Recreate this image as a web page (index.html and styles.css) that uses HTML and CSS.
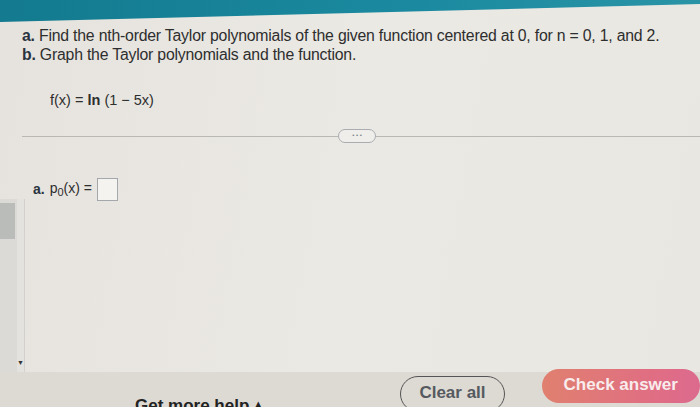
FILE: index.html
```html
<!DOCTYPE html>
<html>
<head>
<meta charset="utf-8">
<link rel="stylesheet" href="styles.css">
</head>
<body>
<div class="page">
  <div class="topbar"></div>
  <div class="main">
    <div class="question">
      <p class="qline"><b class="lbl">a.</b> Find the nth-order Taylor polynomials of the given function centered at 0, for n = 0, 1, and 2.</p>
      <p class="qline"><b class="lbl">b.</b> Graph the Taylor polynomials and the function.</p>
      <p class="func">f(x) = <b>ln</b> (1 − 5x)</p>
    </div>
    <div class="divider">
      <span class="rule"></span>
      <span class="pill">• • •</span>
      <span class="rule"></span>
    </div>
    <div class="workarea">
      <div class="scroller">
        <div class="thumb"></div>
        <div class="arrow">▼</div>
      </div>
      <div class="answer">
        <b class="lbl">a.</b>
        <span class="expr">p<sub>0</sub>(x) =</span>
        <span class="box"></span>
      </div>
    </div>
  </div>
  <div class="footer">
    <span class="help">Get more help ▴</span>
    <span class="btn clear">Clear all</span>
    <span class="btn check">Check answer</span>
  </div>
</div>
</body>
</html>
```
FILE: styles.css
```css
* { box-sizing: border-box; }
html, body { margin: 0; padding: 0; }
body {
  width: 700px;
  height: 407px;
  overflow: hidden;
  font-family: "Liberation Sans", Arial, sans-serif;
  color: #2e2e2e;
  background: #e8e5df;
}
.page {
  width: 700px;
  height: 407px;
  display: flex;
  flex-direction: column;
  background: linear-gradient(100deg, #e6e3de 0%, #ebe9e4 50%, #e9e7e2 100%);
}
.topbar {
  height: 22px;
  flex: none;
  background: linear-gradient(90deg, #137a8f, #1b8aa0 60%, #2a94a6);
  clip-path: polygon(0 0, 100% 0, 100% 4px, 0 22px);
}
.main {
  flex: 1;
  display: flex;
  flex-direction: column;
}
.question {
  padding: 4px 0 0 22px;
}
.qline {
  margin: 0;
  font-size: 15.8px;
  line-height: 19px;
  letter-spacing: -0.2px;
}
.lbl { font-weight: bold; color: #2a3340; }
.func {
  margin: 27px 0 0 28px;
  font-size: 14.5px;
  line-height: 18px;
}
.divider {
  margin-top: 20px;
  padding-left: 22px;
  display: flex;
  align-items: center;
}
.rule {
  height: 1px;
  background: #b9b8b4;
}
.rule:first-child { width: 316px; }
.rule:last-child { flex: 1; }
.pill {
  width: 38px;
  height: 14px;
  border: 1.5px solid #a9adb2;
  border-radius: 7px;
  font-size: 6px;
  line-height: 11px;
  text-align: center;
  color: #77808a;
  background: #efeeea;
}
.workarea {
  flex: 1;
  display: flex;
  margin-top: 34px;
}
.scroller {
  width: 26px;
  margin-top: 22px;
  display: flex;
  flex-direction: column;
  justify-content: space-between;
  align-items: flex-start;
  background: linear-gradient(90deg, #dcdad6 0 17px, #e4e2de 17px 24px, #d3d1cd 24px 25px, transparent 25px);
}
.thumb {
  width: 15px;
  height: 36px;
  margin-top: 4px;
  background: #b9bcb8;
}
.arrow {
  font-size: 7px;
  color: #333;
  margin: 0 0 6px 17px;
}
.answer {
  display: flex;
  align-items: center;
  height: 24px;
  margin-left: 7px;
  font-size: 14px;
  gap: 5px;
}
.expr sub { font-size: 11px; vertical-align: -3px; }
.box {
  width: 21px;
  height: 23px;
  border: 1px solid #a4a7ab;
  background: #f4f3f0;
}
.footer {
  height: 35px;
  flex: none;
  display: flex;
  align-items: flex-start;
  background: #ddd9d3;
}
.help {
  margin: 24px 0 0 135px;
  font-size: 17px;
  color: #222;
  font-weight: bold;
  line-height: 20px;
  width: 268px;
}
.btn {
  font-weight: bold;
  font-size: 17px;
  border-radius: 18px;
  text-align: center;
}
.clear {
  width: 105px;
  height: 36px;
  margin-top: 4px;
  border: 1.5px solid #555;
  color: #555a60;
  line-height: 31px;
}
.check {
  margin-left: 37px;
  margin-top: -3px;
  width: 160px;
  height: 34px;
  line-height: 32px;
  color: #f8ecec;
  background: linear-gradient(90deg, #e0806f, #e06e83 70%, #dc6a8e);
}
```
